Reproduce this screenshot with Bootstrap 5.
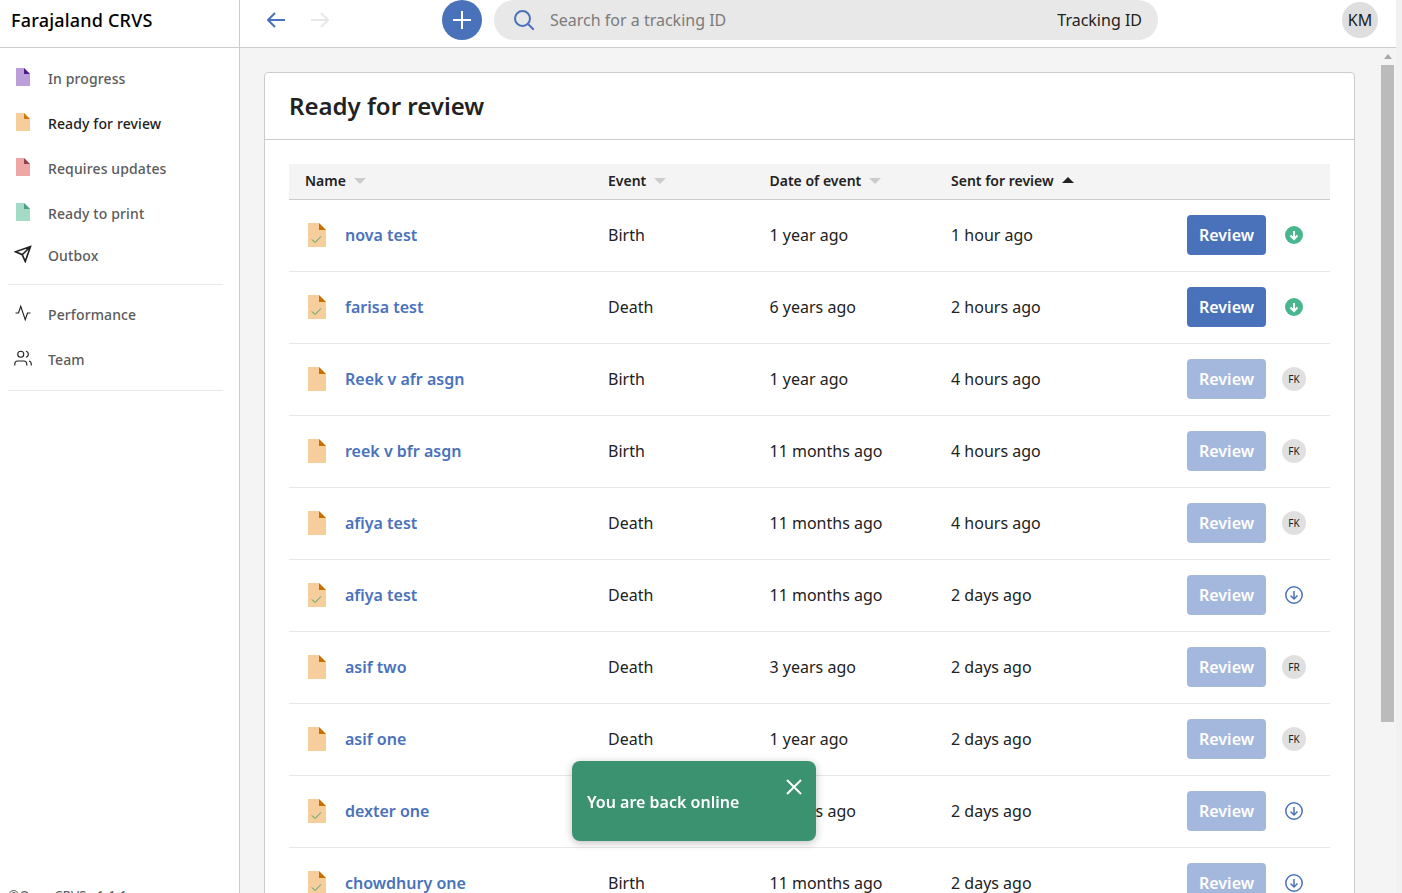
<!DOCTYPE html>
<html lang="en">
<head>
    <meta charset="UTF-8">
    <title>Ready for review</title>
    <link href="https://cdn.jsdelivr.net/npm/bootstrap@5.3.0/dist/css/bootstrap.min.css" rel="stylesheet">
    <style>
        html, body { height: 100%; }
        body {
            font-family: "Noto Sans", sans-serif;
            font-size: 16px;
            color: #222;
            background-color: #f1f1f1;
            overflow: hidden;
            padding-right: 6px;
        }
        .app { height: 893px; overflow: hidden; }

        .sidebar {
            width: 240px;
            flex: 0 0 240px;
            background-color: #fff;
            border-right: 1px solid #ccc;
            overflow: hidden;
        }
        .brand {
            height: 48px;
            flex: 0 0 48px;
            padding: 0 11px;
            font-size: 18px;
            font-weight: 500;
            letter-spacing: .2px;
            color: #000;
            line-height: 41px;
            border-bottom: 1px solid #ccc;
        }
        .side-list { padding-top: 8px; }
        .side-item {
            height: 45px;
            padding-left: 16px;
            gap: 18px;
            font-size: 14px;
            font-weight: 500;
            letter-spacing: .12px;
            color: #5b5b5b;
        }
        .side-item.active { color: #222; }
        .side-item.outbox { height: 39px; }
        .side-item svg { flex: 0 0 14px; margin-top: -3px; }
        .side-item .line-icon { margin-left: -2px; margin-right: -2px; flex: 0 0 18px; margin-top: -4px; }
        .side-rule { height: 1px; margin: 9px 16px 7px 8px; background-color: #e8e8e8; }
        .side-rule:last-child { margin-top: 8px; }
        .side-foot { margin-top: auto; margin-bottom: -13px; padding-left: 8px; font-size: 13.5px; color: #5b5b5b; }

        .topbar {
            height: 48px;
            flex: 0 0 48px;
            background-color: #fff;
            border-bottom: 1px solid #ccc;
            padding: 0 18px 7px 27px;
        }
        .nav-arrow { width: 18px; height: 18px; flex: 0 0 18px; }
        .nav-arrow.next { margin-left: 26px; }
        .add-btn {
            width: 40px;
            height: 40px;
            flex: 0 0 40px;
            margin-left: 113px;
            background-color: #4972bb;
        }
        .search-box {
            width: 664px;
            height: 40px;
            margin-left: 12px;
            padding: 0 16px 0 20px;
            background-color: #e8e8e8;
            border-radius: 20px;
        }
        .search-box .hint { margin-left: 16px; color: #7b7b7b; }
        .avatar-lg {
            width: 36px;
            height: 36px;
            font-size: 16px;
            background-color: #dedede;
            color: #222;
        }

        .content { min-height: 0; background-color: #f4f4f4; overflow: hidden; }
        .scroller { padding: 24px 26px 0 24px; overflow: hidden; }
        .fake-scroll { width: 15px; flex: 0 0 15px; padding-right: 2px; }
        .fake-scroll .up {
            width: 0;
            height: 0;
            margin: 6px auto 6px;
            border-left: 4px solid transparent;
            border-right: 4px solid transparent;
            border-bottom: 5px solid #a8a8a8;
        }
        .fake-scroll .thumb { height: 657px; background-color: #bbb; }

        .review-card { border: 1px solid #ccc; border-radius: 4px; background-color: #fff; }
        .review-card .card-header {
            height: 67px;
            padding: 0 24px;
            background-color: #fff;
            border-bottom: 1px solid #ccc;
        }
        .review-card h1 { margin: 0; font-size: 24px; font-weight: 600; color: #222; }
        .review-card .card-body { padding: 24px 24px 0; }

        .queue { table-layout: fixed; margin: 0; color: #222; }
        .queue th, .queue td { padding: 0; vertical-align: middle; box-shadow: none; }
        .queue thead th {
            height: 35px;
            padding-bottom: 2px;
            font-size: 14px;
            font-weight: 600;
            background-color: #f4f4f4;
            border-bottom: 1px solid #ccc;
        }
        .queue thead th:first-child { padding-left: 16px; }
        .queue tbody td { height: 72px; font-size: 16px; border-bottom: 1px solid #e8e8e8; }
        .queue tbody td:first-child { padding-left: 19px; }
        .caret-sort {
            display: inline-block;
            margin-left: 8px;
            vertical-align: 2px;
            border-left: 6px solid transparent;
            border-right: 6px solid transparent;
            border-top: 6px solid #ccc;
        }
        .caret-sort.up { border-top: 0; border-bottom: 6px solid #222; vertical-align: 3px; }
        .rec-name { margin-left: 19px; font-weight: 600; color: #4972bb; text-decoration: none; }
        .btn-review {
            width: 79px;
            height: 40px;
            padding: 0;
            font-size: 16px;
            font-weight: 600;
            color: #fff;
            background-color: #4972bb;
            border: 0;
            border-radius: 4px;
        }
        .btn-review.off { background-color: #a4b8dd; opacity: 1; color: #fff; }
        .status-slot { width: 56px; flex: 0 0 56px; }
        .avatar-sm {
            width: 24px;
            height: 24px;
            font-size: 10px;
            background-color: #e0e0e0;
            color: #222;
        }

        .back-online {
            position: fixed;
            left: 572px;
            top: 761px;
            width: 244px;
            height: 80px;
            padding: 2px 15px 0;
            color: #fff;
            font-weight: 600;
            background-color: #3b9270;
            border-radius: 8px;
            box-shadow: 0 2px 8px rgba(0,0,0,0.25);
        }
        .back-online svg { position: absolute; right: 13px; top: 17px; }
    </style>
</head>
<body>

<div class="app d-flex">
    <aside class="sidebar d-flex flex-column">
        <div class="brand">Farajaland CRVS</div>
        <div class="side-list" id="sideList"></div>
        <div class="side-foot">©OpenCRVS v1.1.1</div>
    </aside>

    <div class="flex-grow-1 d-flex flex-column" style="min-width:0">
        <header class="topbar d-flex align-items-center">
            <svg class="nav-arrow" viewBox="0 0 18 18" fill="none" stroke="#4972bb" stroke-width="2"><path d="M18 9H1M8 2L1 9l7 7"/></svg>
            <svg class="nav-arrow next" viewBox="0 0 18 18" fill="none" stroke="#e8e8e8" stroke-width="2"><path d="M0 9h17M10 2l7 7-7 7"/></svg>
            <div class="add-btn rounded-circle d-flex align-items-center justify-content-center">
                <svg width="18" height="18" viewBox="0 0 18 18" stroke="#fff" stroke-width="2"><path d="M9 0v18M0 9h18"/></svg>
            </div>
            <div class="search-box d-flex align-items-center">
                <svg width="20" height="20" viewBox="0 0 20 20" fill="none" stroke="#4972bb" stroke-width="2"><circle cx="8.5" cy="8.5" r="7.5"/><path d="M14 14l6 6"/></svg>
                <span class="hint">Search for a tracking ID</span>
                <span class="ms-auto">Tracking ID</span>
            </div>
            <div class="avatar-lg rounded-circle ms-auto d-flex align-items-center justify-content-center">KM</div>
        </header>

        <div class="content flex-grow-1 d-flex">
            <main class="scroller flex-grow-1">
                <div class="card review-card">
                    <div class="card-header d-flex align-items-center">
                        <h1>Ready for review</h1>
                    </div>
                    <div class="card-body">
                        <table class="table queue">
                            <colgroup>
                                <col style="width:319px"><col style="width:161.5px"><col style="width:181.5px"><col style="width:236px"><col>
                            </colgroup>
                            <thead>
                                <tr>
                                    <th>Name<span class="caret-sort"></span></th>
                                    <th>Event<span class="caret-sort"></span></th>
                                    <th>Date of event<span class="caret-sort"></span></th>
                                    <th>Sent for review<span class="caret-sort up"></span></th>
                                    <th></th>
                                </tr>
                            </thead>
                            <tbody id="rows"></tbody>
                        </table>
                    </div>
                </div>
            </main>
            <div class="fake-scroll">
                <div class="up"></div>
                <div class="thumb"></div>
            </div>
        </div>
    </div>
</div>

<div class="back-online d-flex align-items-center">
    You are back online
    <svg width="18" height="18" viewBox="0 0 18 18" stroke="#fff" stroke-width="2"><path d="M2 2l14 14M16 2L2 16"/></svg>
</div>

<script src="https://cdn.jsdelivr.net/npm/bootstrap@5.3.0/dist/js/bootstrap.bundle.min.js"></script>
<script>
    const sideDoc = (body, fold) => `<svg width="14" height="18" viewBox="0 0 14 18"><path d="M0 0h8l6 6v12H0z" fill="${body}"/><path d="M8 0l6 6H8z" fill="${fold}"/></svg>`;
    const lineIcon = (inner, w = 1.5) => `<svg class="line-icon" width="18" height="18" viewBox="0 0 24 24" fill="none" stroke="#222" stroke-width="${w}">${inner}</svg>`;

    const rule = '<div class="side-rule"></div>';
    const sideItem = (icon, label, extra = '') => `<div class="side-item d-flex align-items-center ${extra}">${icon}<span>${label}</span></div>`;

    document.getElementById('sideList').innerHTML = [
        sideItem(sideDoc('#bc9fd9', '#4a1a8a'), 'In progress'),
        sideItem(sideDoc('#f5ce9c', '#d17a0b'), 'Ready for review', 'active'),
        sideItem(sideDoc('#f1a6a6', '#94414f'), 'Requires updates'),
        sideItem(sideDoc('#a4dbc6', '#49a080'), 'Ready to print'),
        sideItem(lineIcon('<path d="M22 2L11 13M22 2l-7 20-4-9-9-4z"/>', 2.2), 'Outbox', 'outbox'),
        rule,
        sideItem(lineIcon('<path d="M22 12h-4l-3 9L9 3l-3 9H2"/>'), 'Performance'),
        sideItem(lineIcon('<path d="M17 22v-2a4 4 0 0 0-4-4H5a4 4 0 0 0-4 4v2"/><circle cx="9" cy="7" r="4"/><path d="M23 22v-2a4 4 0 0 0-3-3.9M16 3.1a4 4 0 0 1 0 7.8"/>'), 'Team'),
        rule
    ].join('');

    const data = [
        ['nova test', 'Birth', '1 year ago', '1 hour ago', true, 'saved', true],
        ['farisa test', 'Death', '6 years ago', '2 hours ago', true, 'saved', true],
        ['Reek v afr asgn', 'Birth', '1 year ago', '4 hours ago', false, 'FK'],
        ['reek v bfr asgn', 'Birth', '11 months ago', '4 hours ago', false, 'FK'],
        ['afiya test', 'Death', '11 months ago', '4 hours ago', false, 'FK'],
        ['afiya test', 'Death', '11 months ago', '2 days ago', false, 'get', true],
        ['asif two', 'Death', '3 years ago', '2 days ago', false, 'FR'],
        ['asif one', 'Death', '1 year ago', '2 days ago', false, 'FK'],
        ['dexter one', 'Death', '2 years ago', '2 days ago', false, 'get', true],
        ['chowdhury one', 'Birth', '11 months ago', '2 days ago', false, 'get', true]
    ];

    const docIcon = tick => `<svg width="18" height="24" viewBox="0 0 18 24" class="flex-shrink-0"><path d="M0 0h11l7 7v17H0z" fill="#f5ce9c"/><path d="M11 0l7 7h-7z" fill="#c96f00"/>${tick ? '<path d="M4 16.500l3 3 6-6" fill="none" stroke="#3f9d78"/>' : ''}</svg>`;

    const statusIcon = s => {
        if (s === 'saved') {
            return '<svg width="18" height="18" viewBox="0 0 18 18"><circle cx="9" cy="9" r="9" fill="#49b78d"/><path d="M9 5v8M5.500 9.500L9 13l3.500-3.500" fill="none" stroke="#fff" stroke-width="2"/></svg>';
        }
        if (s === 'get') {
            return '<svg width="18" height="18" viewBox="0 0 18 18" fill="none" stroke="#4972bb" stroke-width="1.500"><circle cx="9" cy="9" r="8.200"/><path d="M9 5v8M5.500 9.500L9 13l3.500-3.500"/></svg>';
        }
        return `<div class="avatar-sm rounded-circle d-flex align-items-center justify-content-center">${s}</div>`;
    };

    document.getElementById('rows').innerHTML = data.map(r => `
        <tr>
            <td><div class="d-flex align-items-center">${docIcon(r[6])}<a class="rec-name" href="#">${r[0]}</a></div></td>
            <td>${r[1]}</td>
            <td>${r[2]}</td>
            <td>${r[3]}</td>
            <td>
                <div class="d-flex align-items-center justify-content-end pe-2">
                    <button class="btn btn-review ${r[4] ? '' : 'off'}">Review</button>
                    <div class="status-slot d-flex justify-content-center">${statusIcon(r[5])}</div>
                </div>
            </td>
        </tr>
    `).join('');
</script>

</body>
</html>
